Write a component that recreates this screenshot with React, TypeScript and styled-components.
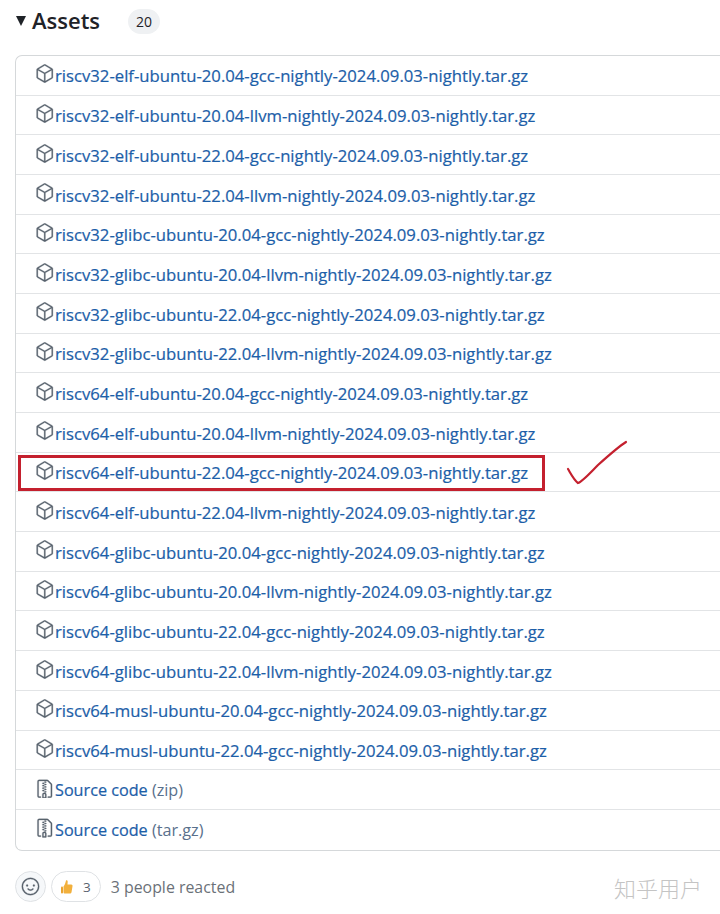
import { createGlobalStyle, styled } from "styled-components";
import { GoPackage, GoFileZip, GoSmiley } from "react-icons/go";

const GlobalStyle = createGlobalStyle`
  html, body {
    margin: 0;
    padding: 0;
    background: #ffffff;
    overflow: hidden;
  }
  body {
    font-family: "Open Sans", "Noto Sans", sans-serif;
    color: #1f2328;
  }
`;

const Page = styled.div`
  width: 720px;
  height: 914px;
  overflow: hidden;
`;

const Header = styled.div`
  display: flex;
  align-items: center;
  height: 55px;
  padding: 0 0 16px 16px;
  box-sizing: border-box;
`;

const Caret = styled.span`
  width: 0;
  height: 0;
  border-left: 5px solid transparent;
  border-right: 5px solid transparent;
  border-top: 10px solid #1f2328;
  margin-right: 6px;
  margin-top: 3px;
`;

const Title = styled.h2`
  margin: 0;
  font-size: 22px;
  font-weight: 600;
  line-height: 30px;
`;

const Counter = styled.span`
  display: flex;
  align-items: center;
  justify-content: center;
  width: 32px;
  height: 25px;
  margin-left: 28px;
  margin-top: 4px;
  border-radius: 13px;
  background: #eff1f3;
  font-size: 14px;
`;

const AssetList = styled.ul`
  list-style: none;
  margin: 0 0 0 15px;
  padding: 0;
  border: 1px solid #d5d8da;
  border-right: none;
  border-radius: 7px 0 0 7px;
  height: 795.5px;
  box-sizing: border-box;
`;

const AssetRow = styled.li`
  position: relative;
  display: flex;
  align-items: center;
  height: 39.7px;
  padding: 1.6px 0 0 19px;
  box-sizing: border-box;
  border-top: 1px solid #e2e4e6;
  &:first-child {
    height: 38.5px;
    padding-top: 0.8px;
    border-top: none;
  }
`;

const IconSlot = styled.span`
  display: flex;
  width: 20px;
  color: #59636e;
  margin-top: -4px;
  flex: none;
`;

const AssetLink = styled.a<{ $size: number }>`
  color: #1c5ea8;
  font-size: ${(p) => p.$size}px;
  font-weight: 500;
  -webkit-text-stroke: 0.2px #1c5ea8;
  white-space: nowrap;
`;

const Muted = styled.span`
  color: #59708c;
  font-weight: 400;
  -webkit-text-stroke: 0;
`;

const Highlight = styled.div`
  position: absolute;
  left: 2px;
  top: 2px;
  width: 527px;
  height: 36px;
  border: 3px solid #c4202e;
  box-sizing: border-box;
`;

const CheckMark = styled.svg`
  position: absolute;
  left: 548px;
  top: -14px;
`;

const Footer = styled.div`
  display: flex;
  align-items: center;
  margin: 20px 20px 0 15px;
  height: 32px;
`;

const SmileButton = styled.span`
  display: flex;
  align-items: center;
  justify-content: center;
  width: 31px;
  height: 31px;
  border: 1px solid #dfe2e5;
  border-radius: 50%;
  box-sizing: border-box;
  background: #f6f8fa;
  color: #59636e;
`;

const ReactionPill = styled.span`
  display: flex;
  align-items: center;
  gap: 10px;
  height: 31px;
  padding: 0 9px;
  margin-left: 5px;
  border: 1px solid #dfe2e5;
  border-radius: 16px;
  box-sizing: border-box;
  font-size: 13.5px;
  color: #59636e;
`;

const ReactedText = styled.span`
  margin-left: 10px;
  font-size: 15.9px;
  color: #6b7178;
`;

const Watermark = styled.span`
  margin-left: auto;
  margin-right: -2px;
  font-family: "Noto Sans CJK SC", sans-serif;
  font-size: 22px;
  font-weight: 300;
  color: #c4c4c4;
`;

const assets = [
  "riscv32-elf-ubuntu-20.04-gcc",
  "riscv32-elf-ubuntu-20.04-llvm",
  "riscv32-elf-ubuntu-22.04-gcc",
  "riscv32-elf-ubuntu-22.04-llvm",
  "riscv32-glibc-ubuntu-20.04-gcc",
  "riscv32-glibc-ubuntu-20.04-llvm",
  "riscv32-glibc-ubuntu-22.04-gcc",
  "riscv32-glibc-ubuntu-22.04-llvm",
  "riscv64-elf-ubuntu-20.04-gcc",
  "riscv64-elf-ubuntu-20.04-llvm",
  "riscv64-elf-ubuntu-22.04-gcc",
  "riscv64-elf-ubuntu-22.04-llvm",
  "riscv64-glibc-ubuntu-20.04-gcc",
  "riscv64-glibc-ubuntu-20.04-llvm",
  "riscv64-glibc-ubuntu-22.04-gcc",
  "riscv64-glibc-ubuntu-22.04-llvm",
  "riscv64-musl-ubuntu-20.04-gcc",
  "riscv64-musl-ubuntu-22.04-gcc",
];

const Thumb = () => (
  <svg width="12" height="14" viewBox="0 0 12 14">
    <path
      d="M5 .5c1-.5 1.800.2 1.700 1.300L6.500 4.500h3.700c1 0 1.500.8 1.300 1.700l-1 6c-.2.9-.8 1.300-1.800 1.300H4C3 13.500 2.500 13 2.500 12V6.500C3.800 5 4.600 2.500 5 .5Z"
      fill="#f2b03c"
    />
    <rect x="0" y="6.500" width="2" height="7" rx="1" fill="#eaa32e" />
  </svg>
);

export default function App() {
  return (
    <Page>
      <GlobalStyle />
      <Header>
        <Caret />
        <Title>Assets</Title>
        <Counter>20</Counter>
      </Header>
      <AssetList>
        {assets.map((name) => (
          <AssetRow key={name}>
            <IconSlot>
              <GoPackage size={19.5} stroke="currentColor" strokeWidth={0.35} />
            </IconSlot>
            <AssetLink $size={16.7}>{name}-nightly-2024.09.03-nightly.tar.gz</AssetLink>
            {name === "riscv64-elf-ubuntu-22.04-gcc" && (
              <>
                <Highlight />
                <CheckMark width="70" height="60" viewBox="0 0 70 60" fill="none">
                  <path
                    d="M4 30 C7 35 10 41 14 44 C18 43 26 34 34 26 C44 17 54 8 62 3"
                    stroke="#c4202e"
                    strokeWidth="2.2"
                    strokeLinecap="round"
                  />
                </CheckMark>
              </>
            )}
          </AssetRow>
        ))}
        {["zip", "tar.gz"].map((kind) => (
          <AssetRow key={kind}>
            <IconSlot>
              <GoFileZip size={19.5} stroke="currentColor" strokeWidth={0.35} />
            </IconSlot>
            <AssetLink $size={16.2}>
              Source code <Muted>({kind})</Muted>
            </AssetLink>
          </AssetRow>
        ))}
      </AssetList>
      <Footer>
        <SmileButton>
          <GoSmiley size={19} stroke="currentColor" strokeWidth={0.3} />
        </SmileButton>
        <ReactionPill>
          <Thumb />3
        </ReactionPill>
        <ReactedText>3 people reacted</ReactedText>
        <Watermark>知乎用户</Watermark>
      </Footer>
    </Page>
  );
}
